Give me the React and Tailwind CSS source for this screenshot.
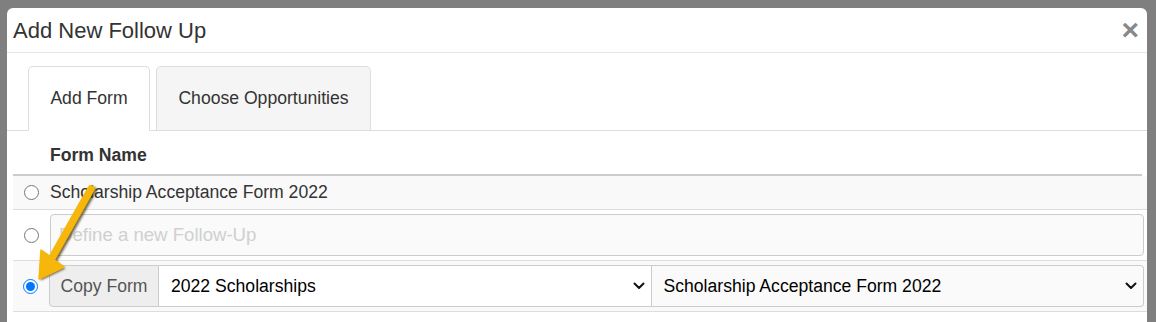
import { useState } from 'react';

function Chevron() {
  return (
    <svg width="12" height="8" viewBox="0 0 12 8" className="pointer-events-none">
      <path d="M1.5 1.5 L6 6 L10.5 1.5" fill="none" stroke="#111" strokeWidth="2" strokeLinecap="round" strokeLinejoin="round" />
    </svg>
  );
}

function Radio({ checked, onChange }) {
  return (
    <input
      type="radio"
      name="followup"
      checked={checked}
      onChange={onChange}
      className="m-0 h-[15px] w-[15px] accent-[#0075ff]"
    />
  );
}

export default function App() {
  const [choice, setChoice] = useState('copy');
  const [tab, setTab] = useState('form');

  const tabs = [
    { id: 'form', label: 'Add Form', w: 'w-[122px]' },
    { id: 'opps', label: 'Choose Opportunities', w: 'w-[215px]' },
  ];

  return (
    <div className="relative h-[322px] w-[1156px] overflow-hidden bg-[#7f7f7f] font-['Liberation_Sans',Arial,sans-serif] text-[#333]">
      <div className="ml-[7px] mt-[8px] w-[1140px] rounded-t-[6px] bg-white pb-[20px]">
        {/* header */}
        <div className="flex h-[45px] items-center justify-between border-b border-[#e5e5e5] pl-[6px] pr-[8px]">
          <h4 className="pt-[1px] text-[22px] leading-none text-[#333]">Add New Follow Up</h4>
          <button className="text-[30px] font-bold leading-none text-[#888]">×</button>
        </div>

        {/* tabs */}
        <div className="flex gap-[6px] border-b border-[#ddd] pl-[21px] pt-[13px]">
          {tabs.map((t) => (
            <button
              key={t.id}
              onClick={() => setTab(t.id)}
              className={
                'relative -mb-px flex h-[65px] items-center justify-center rounded-t-[5px] border text-[17.6px] text-[#333] ' +
                t.w +
                (tab === t.id
                  ? ' border-[#ddd] border-b-white bg-white'
                  : ' border-[#ddd] bg-[#f5f5f5]')
              }
            >
              {t.label}
            </button>
          ))}
        </div>

        {/* form table */}
        <div className="ml-[6px] w-[1134px] text-[17.6px]">
          <div className="mr-[5px] flex h-[45px] items-end border-b-2 border-[#ccc] pb-[6px] pl-[37px] font-bold">
            Form Name
          </div>

          <div className="flex h-[34px] items-center border-b border-[#ddd] bg-[#f9f9f9]">
            <div className="flex w-[37px] shrink-0 pl-[11px]">
              <Radio checked={choice === 'existing'} onChange={() => setChoice('existing')} />
            </div>
            <span className="text-[#333]">Scholarship Acceptance Form 2022</span>
          </div>

          <div className="flex h-[51px] items-center border-b border-[#ddd] bg-white pr-[3px]">
            <div className="flex w-[37px] shrink-0 pl-[11px]">
              <Radio checked={choice === 'new'} onChange={() => setChoice('new')} />
            </div>
            <input
              placeholder="Define a new Follow-Up"
              className="h-[42px] flex-1 rounded-[4px] border border-[#ccc] bg-[#fafafa] px-[8px] text-[18.6px] outline-none placeholder:text-[#d0d0d0]"
            />
          </div>

          <div className="flex h-[51px] items-center border-b border-[#ddd] bg-[#f9f9f9] pr-[3px]">
            <div className="flex w-[37px] shrink-0 pl-[10px]">
              <Radio checked={choice === 'copy'} onChange={() => setChoice('copy')} />
            </div>
            <div className="-ml-px flex h-[42px] flex-1">
              <span className="flex w-[110px] shrink-0 items-center justify-center rounded-l-[4px] border border-[#ccc] bg-[#eee] text-[#555]">
                Copy Form
              </span>
              <div className="relative flex-1">
                <select className="h-full w-full appearance-none border-y border-r border-[#ccc] bg-white pl-[12px] text-[17.6px] text-black outline-none">
                  <option>2022 Scholarships</option>
                </select>
                <div className="pointer-events-none absolute right-[7px] top-[17px]">
                  <Chevron />
                </div>
              </div>
              <div className="relative flex-1">
                <select className="h-full w-full appearance-none rounded-r-[4px] border-y border-r border-[#ccc] bg-[#fafafa] pl-[12px] text-[17.6px] text-black outline-none">
                  <option>Scholarship Acceptance Form 2022</option>
                </select>
                <div className="pointer-events-none absolute right-[7px] top-[17px]">
                  <Chevron />
                </div>
              </div>
            </div>
          </div>
        </div>
      </div>

      {/* annotation arrow */}
      <svg className="pointer-events-none absolute left-0 top-0" width="1156" height="322" viewBox="0 0 1156 322">
        <defs>
          <filter id="sh" x="-50%" y="-50%" width="200%" height="200%">
            <feGaussianBlur stdDeviation="1.2" />
          </filter>
        </defs>
        <g transform="translate(1.5,1.5)" filter="url(#sh)" opacity="0.7">
          <path d="M91 189 L52 258" stroke="#3a2a00" strokeWidth="8" strokeLinecap="round" fill="none" />
          <path d="M39 279 L41 250 L64 267 Z" fill="#3a2a00" />
        </g>
        <path d="M91 189 L52 258" stroke="#f6b60a" strokeWidth="7.5" strokeLinecap="round" fill="none" />
        <path d="M39 279 L41 250 L64 267 Z" fill="#f6b60a" stroke="#f6b60a" strokeWidth="1.5" strokeLinejoin="round" />
      </svg>
    </div>
  );
}
